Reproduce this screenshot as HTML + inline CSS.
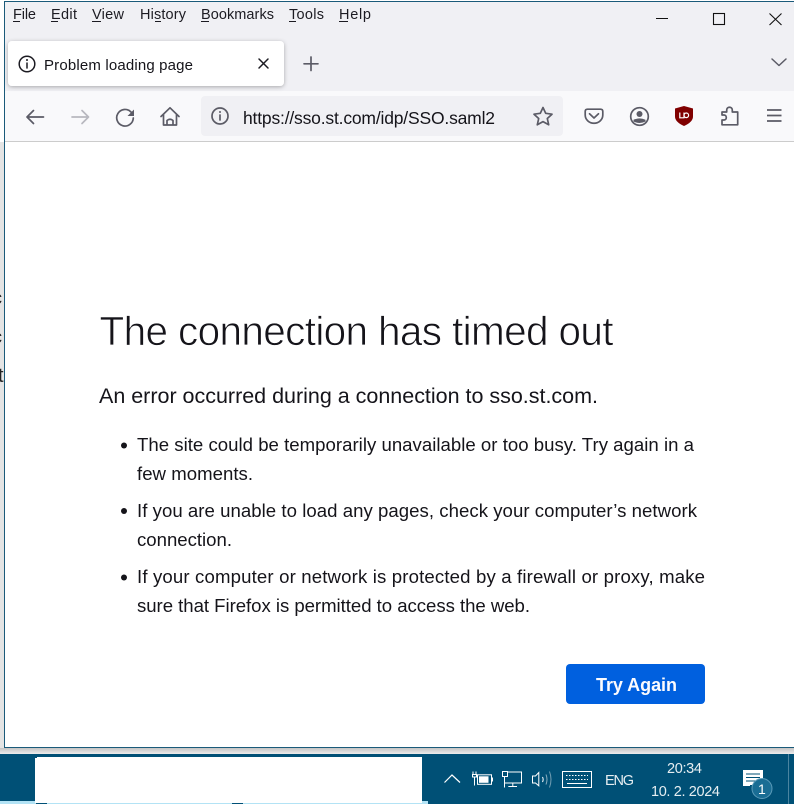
<!DOCTYPE html>
<html><head><meta charset="utf-8"><style>
html,body{margin:0;padding:0;background:#fff;width:794px;height:804px;overflow:hidden}
svg{display:block}
text{font-family:"Liberation Sans",sans-serif}
.m{font-size:14.5px;fill:#1c1b22}
.b{font-size:18.6px;fill:#15141a}
.i{fill:none;stroke:#5b5b66;stroke-width:1.7;stroke-linecap:round;stroke-linejoin:round}
.d{fill:none;stroke:#1c1b22;stroke-width:1.5;stroke-linecap:round}
</style></head><body>
<svg width="794" height="804" viewBox="0 0 794 804" xmlns="http://www.w3.org/2000/svg">
<defs>
<filter id="s" x="-5%" y="-20%" width="110%" height="140%"><feDropShadow dx="0" dy="1" stdDeviation="2" flood-color="#000" flood-opacity=".3"/></filter>
<linearGradient id="g" x1="0" y1="0" x2="0" y2="1"><stop offset="0" stop-color="#c4c4c4"/><stop offset="1" stop-color="#ececec"/></linearGradient>
<clipPath id="l"><rect x="0" y="280" width="4" height="110"/></clipPath>
</defs>
<rect width="794" height="804" fill="#fff"/>
<rect x="0" y="142" width="4" height="606" fill="#e4e4e4"/>
<g clip-path="url(#l)" fill="#222"><text x="-7" y="304" font-size="18">c</text><text x="-7" y="343" font-size="18">c</text><text x="-2" y="382" font-size="20">t</text></g>
<rect x="0" y="748" width="794" height="6" fill="url(#g)"/>

<!-- window chrome -->
<rect x="4" y="1" width="790" height="90" fill="#f0f0f4"/>
<rect x="5" y="91" width="789" height="50" fill="#f9f9fb"/>
<rect x="5" y="141" width="789" height="1" fill="#ccc"/>
<rect x="4" y="1" width="790" height="1" fill="#1a5a7a"/>
<rect x="4" y="1" width="1" height="747" fill="#1a5a7a"/>
<rect x="4" y="747" width="790" height="1" fill="#1a5a7a"/>

<!-- menu -->
<text class="m" x="13" y="19" textLength="23">File</text><rect x="13" y="21" width="7" height="1" fill="#1c1b22"/>
<text class="m" x="51" y="19" textLength="26">Edit</text><rect x="51" y="21" width="7" height="1" fill="#1c1b22"/>
<text class="m" x="92" y="19" textLength="32">View</text><rect x="92" y="21" width="9" height="1" fill="#1c1b22"/>
<text class="m" x="140" y="19" textLength="46">History</text><rect x="155" y="21" width="6" height="1" fill="#1c1b22"/>
<text class="m" x="201" y="19" textLength="73">Bookmarks</text><rect x="201" y="21" width="8" height="1" fill="#1c1b22"/>
<text class="m" x="289" y="19" textLength="35">Tools</text><rect x="289" y="21" width="7" height="1" fill="#1c1b22"/>
<text class="m" x="339" y="19" textLength="32">Help</text><rect x="339" y="21" width="9" height="1" fill="#1c1b22"/>

<!-- window controls -->
<path d="M656 18.500H668" stroke="#111" stroke-width="1" fill="none"/>
<rect x="713.500" y="13.500" width="11" height="11" fill="none" stroke="#111" stroke-width="1.1"/>
<path d="M769.500 13.500L781.500 25M781.500 13.500L769.500 25" stroke="#111" stroke-width="1.1" fill="none"/>
<path d="M772 59L779 65.500L786 59" class="i" style="stroke-width:1.5"/>

<!-- tab -->
<rect x="8" y="41" width="276" height="45" rx="4" fill="#fff" filter="url(#s)"/>
<circle cx="27" cy="64" r="7.800" class="d"/>
<path d="M27 63V68" class="d"/><circle cx="27" cy="60" r="1" fill="#1c1b22"/>
<text x="44" y="70" font-size="15" fill="#15141a" textLength="149">Problem loading page</text>
<path d="M259 59L268 68M268 59L259 68" class="d"/>
<path d="M311 57V70.500M304 63.800H318" class="i"/>

<!-- toolbar -->
<path d="M43.500 117H27M33.500 110.500L27 117L33.500 123.500" class="i"/>
<path d="M88.500 117H72M82 110.500L88.500 117L82 123.500" class="i" style="stroke:#b8b8bf"/>
<path d="M131 112A8.300 8.300 0 1 0 133.300 118" class="i"/><path d="M134 109.500V116H127.500Z" fill="#5b5b66"/>
<path d="M161 116.500L170 107.800L179 116.500M163.500 114.500V125H176.500V114.500M167 125V120.500Q170 118 173 120.500V125" class="i"/>

<rect x="201" y="96" width="362" height="40" rx="4" fill="#f0f0f4"/>
<circle cx="220" cy="116" r="8" class="i"/>
<path d="M220 115V120" class="i"/><circle cx="220" cy="112" r="1" fill="#5b5b66"/>
<text x="243" y="124" font-size="17.500" fill="#15141a" textLength="252">https://sso.st.com/idp/SSO.saml2</text>
<path d="M543 107.500L545.700 113.300L552 114.200L547.300 118.500L548.700 124.800L543 121.600L537.300 124.800L538.700 118.500L534 114.200L540.300 113.300Z" class="i"/>

<path d="M587.500 109.200H600.500Q602.800 109.200 602.800 111.500V115A8.800 8.300 0 0 1 585.200 115V111.500Q585.200 109.200 587.500 109.200ZM589.500 113.800L594 118L598.500 113.800" class="i"/>
<circle cx="639.500" cy="116.500" r="8.800" class="i"/><circle cx="639.500" cy="114" r="3" fill="#5b5b66"/><path d="M633.500 119.800Q639.500 117 645.500 119.800V121.500Q639.500 124.500 633.500 121.500Z" fill="#5b5b66"/>
<path d="M684 106L693 108.500V116.500Q693 122 684 126Q675 122 675 116.500V108.500Z" fill="#800000"/>
<path d="M679.800 112.500V117.800H684V112.500" fill="none" stroke="#fff" stroke-width="1.200"/><circle cx="686.300" cy="115.300" r="2.300" fill="none" stroke="#fff" stroke-width="1.200"/>
<path d="M722 112H726.700V110A2.800 2.800 0 0 1 732.300 110V112H737.700V124.800H722V120H724A2.300 2.500 0 0 0 724 115H722Z" class="i"/>
<path d="M767 110H781.500M767 115.500H781.500M767 121H781.500" class="i" style="stroke-linecap:butt"/>

<!-- content -->
<text x="99.500" y="345" font-size="40.500" fill="#15141a" stroke="#fff" stroke-width=".75" textLength="514">The connection has timed out</text>
<text x="99" y="403" font-size="21.500" fill="#15141a" textLength="499">An error occurred during a connection to sso.st.com.</text>
<circle cx="124" cy="445.500" r="3" fill="#15141a"/>
<text class="b" x="137" y="451" textLength="557">The site could be temporarily unavailable or too busy. Try again in a</text>
<text class="b" x="137" y="480" textLength="116">few moments.</text>
<circle cx="124" cy="511" r="3" fill="#15141a"/>
<text class="b" x="137" y="517" textLength="560">If you are unable to load any pages, check your computer’s network</text>
<text class="b" x="137" y="546" textLength="95">connection.</text>
<circle cx="124" cy="577.500" r="3" fill="#15141a"/>
<text class="b" x="137" y="583" textLength="568">If your computer or network is protected by a firewall or proxy, make</text>
<text class="b" x="137" y="612" textLength="393">sure that Firefox is permitted to access the web.</text>
<rect x="566" y="664" width="139" height="40" rx="4" fill="#0060df"/>
<text x="596" y="691" font-size="18" font-weight="700" fill="#fbfbfe" textLength="81">Try Again</text>

<!-- taskbar -->
<rect x="0" y="754" width="794" height="50" fill="#005076"/>
<rect x="0" y="801" width="35" height="3" fill="#b3e3f5"/>
<rect x="35" y="803" width="387" height="1" fill="#b3e3f5"/>
<path d="M35 758H37V757H422V803H35Z" fill="#fff"/>
<rect x="36" y="803" width="11" height="1" fill="#005076"/><rect x="232" y="803" width="11" height="1" fill="#005076"/>
<rect x="422" y="801" width="6" height="3" fill="#b3e3f5"/>
<rect x="788" y="754" width="1" height="50" fill="#4a84a0"/>
<path d="M444.500 782.500L452 775L460 782.500" fill="none" stroke="#fff" stroke-width="1.200"/>
<g fill="none" stroke="#fff" stroke-width="1">
<path d="M473 771.500V774.500M476 771.500V774.500M472.500 774.500H476.500V777H472.500ZM474.500 777V785.500"/>
<rect x="477.500" y="774.800" width="14" height="9.500"/><rect x="479" y="776.300" width="9.500" height="6.500" fill="#fff" stroke="none"/><rect x="492" y="777.500" width="1" height="4" fill="#fff" stroke="none"/>
<path d="M507.500 772H521.500V783H505M512.800 783V786M508.300 786.500H517"/><rect x="502.500" y="771.500" width="5" height="5"/><path d="M504.500 776.500V787.500"/>
<path d="M532.500 776V783H535.500L538.800 785.800V772.500L535.500 776Z"/><path d="M542.500 777Q543.800 779.500 542.500 782" /><path d="M546 774.500Q548 779.500 546 784.500" stroke-opacity=".55"/><path d="M549.500 771.500Q552.500 779.500 549.500 787.500" stroke-opacity=".45"/>
<rect x="562.500" y="771.500" width="29" height="16"/><path d="M566 775.500H588M566 779.500H588" stroke-dasharray="1.500 1.500"/><path d="M567 783.500H587"/>
</g>
<text x="605" y="785" font-size="14.500" fill="#fff" fill-opacity=".9" textLength="29">ENG</text>
<text x="667" y="773" font-size="14.500" fill="#fff" fill-opacity=".9" textLength="35">20:34</text>
<text x="651" y="796" font-size="14.500" fill="#fff" fill-opacity=".9" textLength="69">10. 2. 2024</text>
<path d="M743 770H763V785H750V786H743Z" fill="#fff"/>
<path d="M746 774H760M746 777.500H760M746 781H756" stroke="#005076" stroke-width="1"/>
<circle cx="762" cy="788.500" r="10" fill="#1a6d94" stroke="#5a9ab8" stroke-width="1"/>
<text x="758" y="794" font-size="14" fill="#fff">1</text>
</svg>
</body></html>
